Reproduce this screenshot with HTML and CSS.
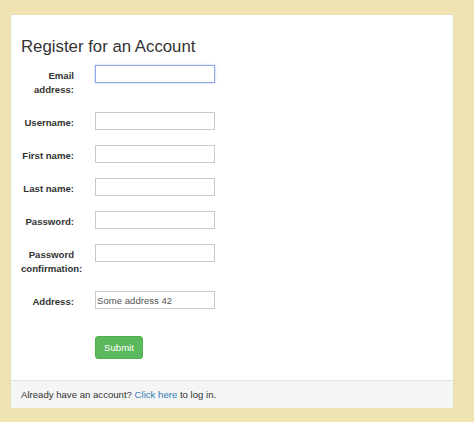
FILE: index.html
```html
<!DOCTYPE html>
<html>
<head>
<meta charset="utf-8">
<link rel="stylesheet" href="styles.css">
</head>
<body>
<div class="panel">
  <div class="panel-body">
    <h3 class="title">Register for an Account</h3>
    <form class="form">
      <label class="label" for="email">Email address:</label>
      <input class="input input-focus" id="email" type="text">
      <label class="label" for="username">Username:</label>
      <input class="input" id="username" type="text">
      <label class="label" for="first">First name:</label>
      <input class="input" id="first" type="text">
      <label class="label" for="last">Last name:</label>
      <input class="input" id="last" type="text">
      <label class="label" for="pw">Password:</label>
      <input class="input" id="pw" type="password">
      <label class="label" for="pw2">Password confirmation:</label>
      <input class="input" id="pw2" type="password">
      <label class="label" for="addr">Address:</label>
      <input class="input" id="addr" type="text" value="Some address 42">
      <div class="submit-row"><button class="btn" type="button">Submit</button></div>
    </form>
  </div>
  <div class="panel-footer">Already have an account? <a class="link" href="#">Click here</a> to log in.</div>
</div>
</body>
</html>
```
FILE: styles.css
```css
html, body {
  margin: 0;
  padding: 0;
}
body {
  background: #efe3b1;
  font-family: "Liberation Sans", Arial, sans-serif;
  color: #333;
  height: 422px;
  overflow: hidden;
}
.panel {
  margin: 14px 20px 0 10px;
  background: #fff;
  border: 1px solid #e9dfba;
}
.panel-body {
  padding: 23px 10px 21px 10px;
}
.title {
  margin: 0 0 9px 0;
  font-size: 16.8px;
  line-height: 18px;
  font-weight: normal;
  color: #333;
}
.form {
  display: grid;
  grid-template-columns: 53px 120px;
  column-gap: 21px;
  row-gap: 15px;
  align-items: start;
}
.label {
  font-size: 9.6px;
  line-height: 14px;
  font-weight: bold;
  text-align: right;
  padding-top: 4px;
  color: #333;
}
.input {
  box-sizing: border-box;
  width: 120px;
  height: 18px;
  margin: 0;
  padding: 0 1px;
  border: 1px solid #c9c9c9;
  border-radius: 0;
  font-family: "Liberation Sans", Arial, sans-serif;
  font-size: 9.6px;
  color: #555;
  background: #fff;
  outline: none;
}
.input-focus {
  border-color: #8ea9e3;
  box-shadow: 0 0 2px rgba(102, 140, 233, 0.5);
}
.submit-row {
  grid-column: 2;
  margin-top: 12px;
}
.btn {
  box-sizing: border-box;
  width: 48px;
  height: 23px;
  padding: 0;
  border: 1px solid #4fb04f;
  border-radius: 3px;
  background: #5cb85c;
  color: #fff;
  font-family: "Liberation Sans", Arial, sans-serif;
  font-size: 9.6px;
}
.panel-footer {
  box-sizing: border-box;
  height: 28px;
  border-top: 1px solid #e3e3e3;
  background: #f5f5f5;
  padding: 0 10px;
  font-size: 9.6px;
  line-height: 27px;
  color: #333;
}
.link {
  color: #337ab7;
  text-decoration: none;
}
```
